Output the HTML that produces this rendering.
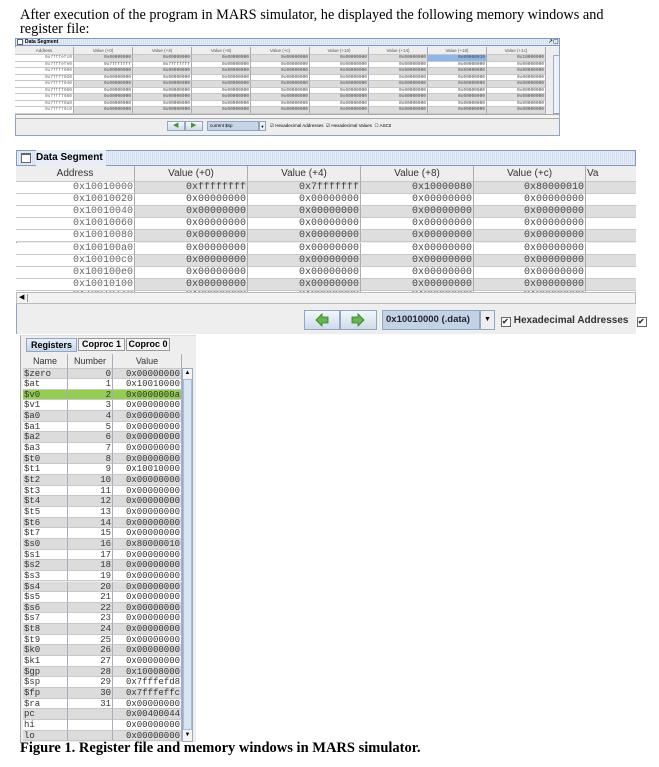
<!DOCTYPE html>
<html><head><meta charset="utf-8"><style>
*{margin:0;padding:0;box-sizing:border-box}
body{width:659px;height:767px;background:#fff;position:relative;overflow:hidden;font-family:"Liberation Sans",sans-serif}
.p{position:absolute;font-family:"Liberation Serif",serif;font-size:14.3px;color:#000;left:20px;line-height:14px}
.abs{position:absolute}
.tb{background:repeating-linear-gradient(90deg,#e6edf7 0 1px,#d3dff0 1px 2px);border:1px solid #7e9dc6}
.grid div{position:absolute;white-space:nowrap;overflow:hidden}
.mono{font-family:"Liberation Mono",monospace}
.btn{position:absolute;background:linear-gradient(#f4f7fb,#cfdbea);border:1px solid #8fa6c4}
</style></head><body>
<div class="p" style="top:8px">After execution of the program in MARS simulator, he displayed the following memory windows and</div>
<div class="p" style="top:22px">register file:</div>

<div class="abs" style="left:15px;top:38px;width:545px;height:98px;border:1px solid #8aa5c8;background:#eee"></div>
<div class="abs tb" style="left:15px;top:38px;width:545px;height:8px"></div>
<div class="abs" style="left:17px;top:39px;width:6px;height:6px;border:1px solid #666;background:#fff"></div>
<div class="abs" style="left:25px;top:38px;font-size:5px;font-weight:bold;line-height:8px">Data Segment</div>
<div class="abs" style="left:548px;top:38px;font-size:6px;line-height:8px">&#x2197;&#x25A2;</div>
<div id="small"></div>
<div class="abs" style="left:15px;top:114px;width:545px;height:5px;border:1px solid #aaa;background:#f4f4f4"></div>
<div class="btn" style="left:167px;top:121px;width:18px;height:10px"></div>
<div class="btn" style="left:185px;top:121px;width:18px;height:10px"></div>
<div class="abs" style="left:173px;top:123px;color:#3a9a2a;font-size:7px;line-height:6px">&#x25C0;</div>
<div class="abs" style="left:191px;top:123px;color:#3a9a2a;font-size:7px;line-height:6px">&#x25B6;</div>
<div class="abs" style="left:207px;top:121px;width:52px;height:10px;background:#c6d5e8;border:1px solid #8fa6c4;font-size:4.5px;line-height:8px;padding-left:2px">current $sp</div>
<div class="abs" style="left:259px;top:121px;width:7px;height:10px;border:1px solid #8fa6c4;background:#eee;font-size:4px;line-height:9px;text-align:center">&#x25BC;</div>
<div class="abs" style="left:270px;top:123px;font-size:4.5px;line-height:6px">&#x2611; Hexadecimal Addresses &nbsp;&#x2611; Hexadecimal Values &nbsp;&#x2610; ASCII</div>

<div class="abs" style="left:16px;top:150px;width:620px;height:184px;background:#eee;border-left:1px solid #8aa5c8"></div>
<div class="abs tb" style="left:16px;top:150px;width:620px;height:16px"></div>
<div class="abs" style="left:21px;top:153px;width:10px;height:10px;border:1px solid #666;background:#fff;border-top-width:2px"></div>
<div class="abs" style="left:36px;top:150px;font-size:10px;font-weight:bold;line-height:16px;background:#e6edf7;padding-right:3px">Data Segment</div>
<div id="big"></div>
<div class="abs" style="left:16px;top:292px;width:620px;height:12px;background:#f2f2f2;border:1px solid #bbb"></div>
<div class="abs" style="left:19px;top:294px;font-size:7px;line-height:8px;border-right:1px solid #999;padding-right:3px">&#x25C0;</div>
<div class="btn" style="left:304px;top:310px;width:36px;height:20px"></div>
<div class="btn" style="left:340px;top:310px;width:37px;height:20px"></div>
<svg class="abs" style="left:315px;top:313px" width="14" height="14"><path d="M1 7 L7 1 V4 H13 V10 H7 V13 Z" fill="#5fb84a" stroke="#2e7d21" stroke-width="0.8"/></svg>
<svg class="abs" style="left:351px;top:313px" width="14" height="14"><path d="M13 7 L7 1 V4 H1 V10 H7 V13 Z" fill="#5fb84a" stroke="#2e7d21" stroke-width="0.8"/></svg>
<div class="abs" style="left:382px;top:310px;width:98px;height:20px;background:#c3d3e7;border:1px solid #8fa6c4;font-size:9.5px;font-weight:bold;line-height:18px;padding-left:3px;color:#223">0x10010000 (.data)</div>
<div class="abs" style="left:480px;top:310px;width:15px;height:20px;background:#eee;border:1px solid #8fa6c4;font-size:7px;line-height:18px;text-align:center">&#x25BC;</div>
<div class="abs" style="left:501px;top:314px;font-size:10px;font-weight:bold;line-height:14px;color:#333;white-space:nowrap"><span style="display:inline-block;width:10px;height:10px;border:1px solid #666;background:#fff;font-size:8px;line-height:8px;vertical-align:-1px">&#x2714;</span> Hexadecimal Addresses &nbsp;&nbsp;<span style="display:inline-block;width:10px;height:10px;border:1px solid #666;background:#fff;font-size:8px;line-height:8px;vertical-align:-1px">&#x2714;</span></div>

<div class="abs" style="left:20px;top:335px;width:176px;height:407px;border-left:1px solid #aaa;border-top:1px solid #ddd;background:#eee"></div>
<div class="abs" style="left:26px;top:338px;width:51px;height:14px;background:linear-gradient(#e8eef7,#c7d6ea);border:1px solid #8fa6c4;font-size:9px;font-weight:bold;text-align:center;line-height:12px">Registers</div>
<div class="abs" style="left:78px;top:338px;width:47px;height:13px;background:#f4f4f4;border:1px solid #999;font-size:9px;font-weight:bold;text-align:center;line-height:11px">Coproc 1</div>
<div class="abs" style="left:126px;top:338px;width:44px;height:13px;background:#f4f4f4;border:1px solid #999;font-size:9px;font-weight:bold;text-align:center;line-height:11px">Coproc 0</div>
<div id="reg"></div>
<div class="abs" style="left:182px;top:368px;width:11px;height:374px;background:#eef2f8;border:1px solid #9aaccc"></div>
<div class="abs" style="left:183px;top:369px;width:9px;height:9px;font-size:6px;line-height:9px;text-align:center;background:#f4f4f4">&#x25B2;</div>
<div class="abs" style="left:183px;top:379px;width:9px;height:351px;background:#dae5f3;border:1px solid #a9bcd8"></div>
<div class="abs" style="left:183px;top:731px;width:9px;height:9px;font-size:6px;line-height:9px;text-align:center;background:#f4f4f4">&#x25BC;</div>

<div class="abs" style="left:20px;top:740px;font-family:'Liberation Serif',serif;font-weight:bold;font-size:14.5px;line-height:16px">Figure 1. Register file and memory windows in MARS simulator.</div>

<script>
function cell(l,t,w,h,txt,bg,al,fs,cls,col){return '<div class="'+(cls||'')+'" style="left:'+l+'px;top:'+t+'px;width:'+w+'px;height:'+h+'px;background:'+bg+';text-align:'+al+';font-size:'+fs+'px;line-height:'+h+'px;border-right:1px solid #aab;border-bottom:1px solid #c8c8c8;padding:0 1px;color:'+(col||'#333')+'">'+txt+'</div>';}
var s='<div class="grid">';var sx=15,cw=59;
var sh=['Address','Value (+0)','Value (+4)','Value (+8)','Value (+c)','Value (+10)','Value (+14)','Value (+18)','Value (+1c)'];
for(var i=0;i<9;i++)s+=cell(sx+i*cw,47,cw,8,sh[i],'#eee','center',4.5,'','#555');
var sa=['0x7fffefc0','0x7fffefe0','0x7ffff000','0x7ffff020','0x7ffff040','0x7ffff060','0x7ffff080','0x7ffff0a0','0x7ffff0c0'];
for(var r=0;r<9;r++){var y=55+r*6.5;var bg=r%2==0?'#dcdcdc':'#fff';
 s+=cell(sx,y,cw,6.5,sa[r],'#fff','right',4.5,'mono','#666');
 for(var c=1;c<9;c++){var v='0x00000000';if(r==1&&(c==1||c==2))v='0x7fffffff';if(r==0&&c==8)v='0x10000000';if(r==0&&c==7)v='0x00000010';
 s+=cell(sx+c*cw,y,cw,6.5,v,(r==0&&c==7)?'#8fb8ea':bg,'right',4.5,'mono','#444');}}
s+='</div><div class="abs" style="left:553px;top:55px;width:7px;height:59px;background:#eef2f8;border:1px solid #9aaccc"></div>';
document.getElementById('small').innerHTML=s;
var b='<div class="grid">';var bx=[16,135,248,361,474,586,640];
var bh=['Address','Value (+0)','Value (+4)','Value (+8)','Value (+c)','Va'];
for(var i=0;i<6;i++)b+=cell(bx[i],166,bx[i+1]-bx[i],16,bh[i],'#eee',i==5?'left':'center',10,'','#333');
var ba=['0x10010000','0x10010020','0x10010040','0x10010060','0x10010080','0x100100a0','0x100100c0','0x100100e0','0x10010100','0x10010120'];
for(var r=0;r<10;r++){var y=182+r*12.1;var h=r==9?3:12.1;var bg=r%2==0?'#dedede':'#fff';
 b+=cell(bx[0],y,bx[1]-bx[0],h,ba[r],'#fff','right',10,'mono','#666');
 for(var c=1;c<6;c++){var v='0x00000000';if(r==0){v=['','0xffffffff','0x7fffffff','0x10000080','0x80000010',''][c];}if(c==5)v='';
 b+=cell(bx[c],y,bx[c+1]-bx[c],h,v,bg,'right',10,'mono','#444');}}
b+='</div><div class="abs" style="left:636px;top:140px;width:23px;height:200px;background:#fff"></div>';
document.getElementById('big').innerHTML=b;
var g='<div class="grid">';var gx=[23,68,113,182];
var gh=['Name','Number','Value'];
for(var i=0;i<3;i++)g+=cell(gx[i],354,gx[i+1]-gx[i],15,gh[i],'#eee','center',9,'','#333');
var names=['$zero','$at','$v0','$v1','$a0','$a1','$a2','$a3','$t0','$t1','$t2','$t3','$t4','$t5','$t6','$t7','$s0','$s1','$s2','$s3','$s4','$s5','$s6','$s7','$t8','$t9','$k0','$k1','$gp','$sp','$fp','$ra','pc','hi','lo'];
var vals={1:'0x10010000',2:'0x0000000a',9:'0x10010000',16:'0x80000010',28:'0x10008000',29:'0x7fffefd8',30:'0x7fffeffc',32:'0x00400044'};
for(var r=0;r<35;r++){var y=368.5+r*10.65;var bg=r==2?'#92cf50':(r%2==0?'#dcdcdc':'#fff');
 g+=cell(gx[0],y,45,10.65,names[r],bg,'left',9,'mono','#333');
 g+=cell(gx[1],y,45,10.65,r<32?r:'',bg,'right',9,'mono','#333');
 g+=cell(gx[2],y,69,10.65,vals[r]||'0x00000000',bg,'right',9,'mono','#333');}
g+='</div>';
document.getElementById('reg').innerHTML=g;
</script>
</body></html>
